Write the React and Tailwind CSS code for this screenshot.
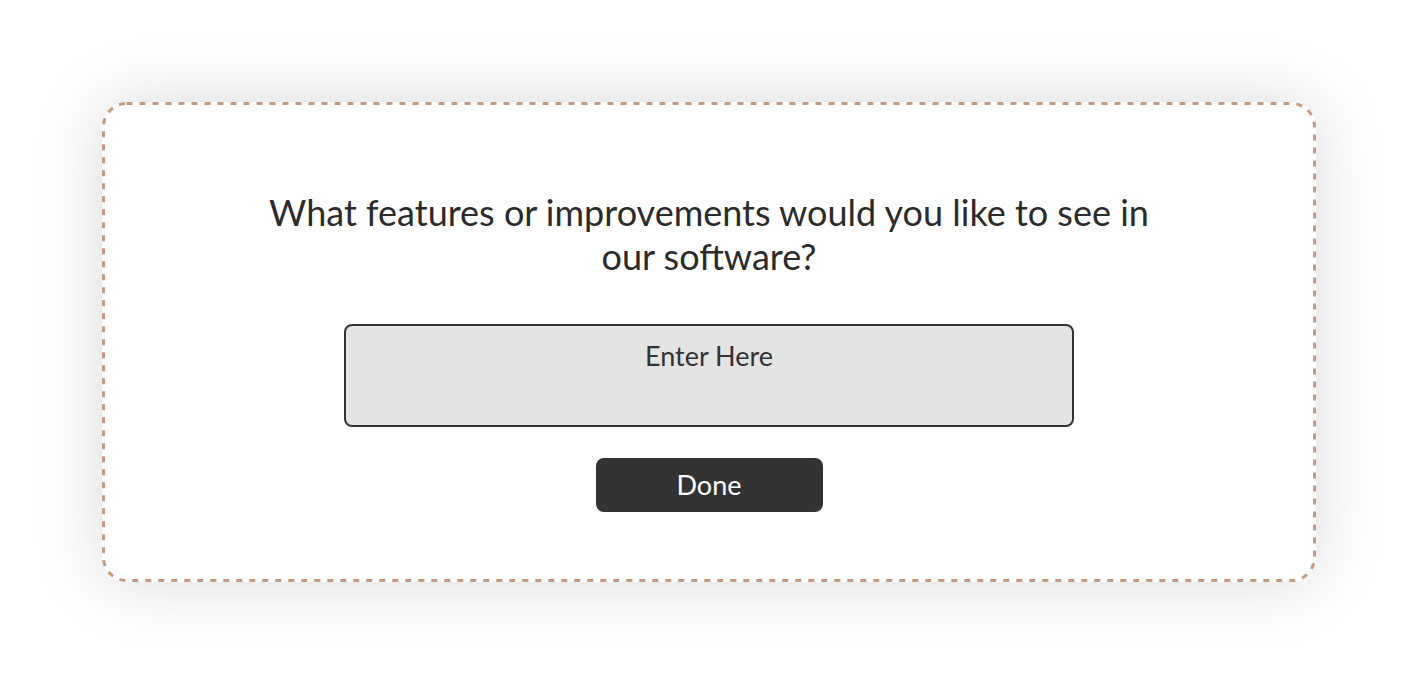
export default function App() {
  return (
    <div className="w-full h-[684px] bg-white p-[102px] font-['Lato',sans-serif]">
      <div className="relative h-full w-full rounded-[24px] bg-white shadow-[0_0_70px_rgba(0,0,0,0.15)] flex flex-col items-center pt-[88px]">
        {/* dashed outline */}
        <svg className="absolute inset-0 w-full h-full pointer-events-none" viewBox="0 0 1214 480" preserveAspectRatio="none">
          <rect x="1.5" y="1.5" width="1211" height="477" rx="23" fill="none" stroke="#c49a80" strokeWidth="3" strokeDasharray="6 7" />
        </svg>
        <h1 className="text-[36px] leading-[44px] text-[#2b2b2b] text-center max-w-[920px]">
          What features or improvements would you like to see in our software?
        </h1>
        <div className="mt-[46px] w-[730px] h-[103px] rounded-[8px] border-2 border-[#333] bg-[#e4e4e4] text-center pt-[14px] text-[27px] leading-[32px] text-[#333]">
          Enter Here
        </div>
        <button className="mt-[31px] w-[227px] h-[54px] rounded-[8px] bg-[#333] text-white text-[27px] leading-[32px]">
          Done
        </button>
      </div>
    </div>
  );
}
